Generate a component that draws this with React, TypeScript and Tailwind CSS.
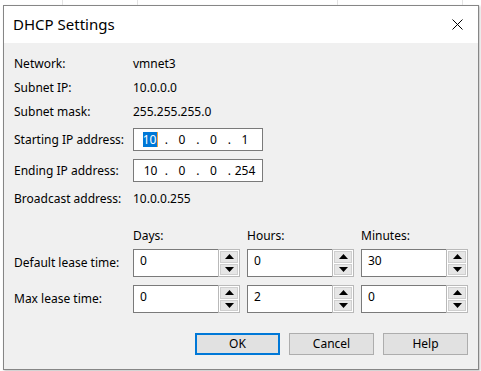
import React from "react";

const font = { fontFamily: '"Noto Sans", "Open Sans", sans-serif' };

function Spin({ value }: { value: string }) {
  return (
    <div className="flex h-[28px] w-[107px]">
      <div className="flex-1 border border-[#7a7a7a] border-r-0 bg-white pl-[6px] pt-[3px] text-[12px] leading-[16px] text-black">
        {value}
      </div>
      <div className="flex w-[22px] flex-col border border-[#b9b9b9] bg-white p-px gap-px">
        <div className="flex flex-1 items-center justify-center bg-[#e6e6e6] border border-[#cfcfcf]">
          <svg width="9" height="5" viewBox="0 0 9 5"><path d="M0 5 L4.5 0 L9 5 Z" fill="#000" /></svg>
        </div>
        <div className="flex flex-1 items-center justify-center bg-[#e6e6e6] border border-[#cfcfcf]">
          <svg width="9" height="5" viewBox="0 0 9 5"><path d="M0 0 L4.5 5 L9 0 Z" fill="#000" /></svg>
        </div>
      </div>
    </div>
  );
}

function IpBox({ parts, selectFirst }: { parts: string[]; selectFirst?: boolean }) {
  return (
    <div className="flex h-[23px] w-[130px] items-center border border-[#7a7a7a] bg-white pl-[5px] text-[12px] text-black">
      {parts.map((p, i) => (
        <React.Fragment key={i}>
          <span className="flex w-[23px] justify-center">
            {i === 0 && selectFirst ? (
              <span className="bg-[#0078d7] text-white leading-[15px] border-r border-[#f7a33b] pr-px">{p}</span>
            ) : (
              <span className="leading-[15px]">{p}</span>
            )}
          </span>
          {i < 3 && <span className="flex w-[8.5px] justify-center">.</span>}
        </React.Fragment>
      ))}
    </div>
  );
}

function Btn({ label, def }: { label: string; def?: boolean }) {
  return (
    <div
      className={
        "flex h-[22px] w-[85px] items-center justify-center bg-[#e1e1e1] text-[12px] text-black " +
        (def ? "border-2 border-[#0078d7]" : "border border-[#adadad]")
      }
    >
      {label}
    </div>
  );
}

export default function App() {
  return (
    <div className="relative h-[371px] w-[481px] overflow-hidden bg-white" style={font}>
      <div className="flex h-[5px]">
        <div className="w-[63px] border-r border-[#e3e3e3]" />
        <div className="w-[75px] border-r border-[#e3e3e3]" />
        <div className="w-[200px] border-r border-[#e3e3e3]" />
        <div className="w-[125px] border-r border-[#e3e3e3]" />
      </div>
      <div className="ml-[3px] flex h-[365px] w-[476px] flex-col border border-[#868686] bg-[#f0f0f0] shadow-[1px_1px_2px_rgba(0,0,0,0.25)]">
        <div className="flex h-[37px] items-center justify-between bg-white pl-[9px] pr-[14px]">
          <span className="text-[15px] text-black">DHCP Settings</span>
          <svg width="11" height="11" viewBox="0 0 11 11" className="mr-[1px]">
            <path d="M0.5 0.5 L10.5 10.5 M10.5 0.5 L0.5 10.5" stroke="#000" strokeWidth="1" />
          </svg>
        </div>
        <div className="flex flex-col pl-[10px] pt-[9px] text-[12px] text-black">
          <div className="flex h-[24px] items-center">
            <span className="w-[119px]">Network:</span>
            <span>vmnet3</span>
          </div>
          <div className="flex h-[24px] items-center">
            <span className="w-[119px]">Subnet IP:</span>
            <span>10.0.0.0</span>
          </div>
          <div className="flex h-[24px] items-center">
            <span className="w-[119px]">Subnet mask:</span>
            <span>255.255.255.0</span>
          </div>
          <div className="mt-[4px] flex h-[23px] items-center">
            <span className="w-[119px]">Starting IP address:</span>
            <IpBox parts={["10", "0", "0", "1"]} selectFirst />
          </div>
          <div className="mt-[8px] flex h-[23px] items-center">
            <span className="w-[119px]">Ending IP address:</span>
            <IpBox parts={["10", "0", "0", "254"]} />
          </div>
          <div className="mt-[5px] flex h-[24px] items-center">
            <span className="w-[119px]">Broadcast address:</span>
            <span>10.0.0.255</span>
          </div>
          <div className="mt-[17px] flex h-[16px] items-center">
            <span className="w-[119px]" />
            <span className="w-[114px]">Days:</span>
            <span className="w-[114px]">Hours:</span>
            <span>Minutes:</span>
          </div>
          <div className="mt-[5px] flex h-[28px] items-center">
            <span className="w-[119px]">Default lease time:</span>
            <div className="flex gap-[7px]">
              <Spin value="0" />
              <Spin value="0" />
              <Spin value="30" />
            </div>
          </div>
          <div className="mt-[8px] flex h-[28px] items-center">
            <span className="w-[119px]">Max lease time:</span>
            <div className="flex gap-[7px]">
              <Spin value="0" />
              <Spin value="2" />
              <Spin value="0" />
            </div>
          </div>
          <div className="mt-[20px] flex justify-end gap-[9px] pr-[10px]">
            <Btn label="OK" def />
            <Btn label="Cancel" />
            <Btn label="Help" />
          </div>
        </div>
      </div>
    </div>
  );
}
